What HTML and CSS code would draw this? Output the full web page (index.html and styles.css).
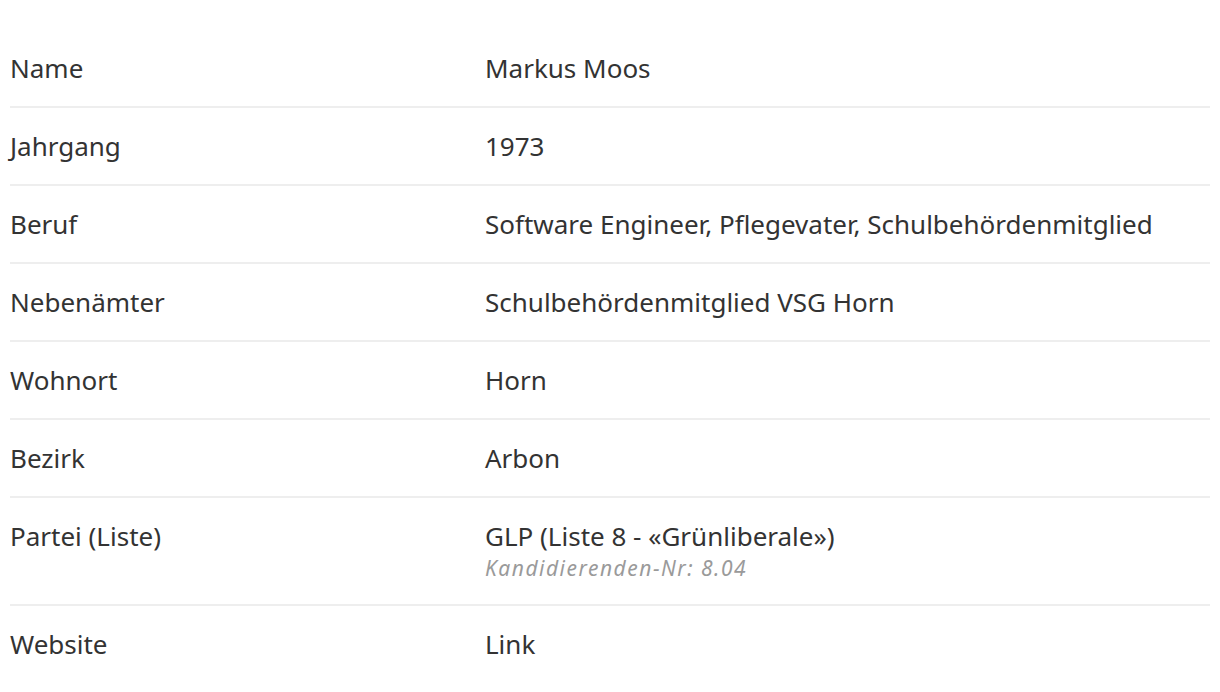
FILE: index.html
```html
<!DOCTYPE html>
<html lang="de">
<head>
<meta charset="utf-8">
<link rel="stylesheet" href="styles.css">
</head>
<body>
<div class="page">
  <div class="info">
    <div class="row"><div class="label">Name</div><div class="value">Markus Moos</div></div>
    <div class="row"><div class="label">Jahrgang</div><div class="value">1973</div></div>
    <div class="row"><div class="label">Beruf</div><div class="value">Software Engineer, Pflegevater, Schulbehördenmitglied</div></div>
    <div class="row"><div class="label">Nebenämter</div><div class="value">Schulbehördenmitglied VSG Horn</div></div>
    <div class="row"><div class="label">Wohnort</div><div class="value">Horn</div></div>
    <div class="row"><div class="label">Bezirk</div><div class="value">Arbon</div></div>
    <div class="row"><div class="label">Partei (Liste)</div><div class="value">GLP (Liste 8 - «Grünliberale»)<div class="sub">Kandidierenden-Nr: 8.04</div></div></div>
    <div class="row"><div class="label">Website</div><div class="value"><a class="link" href="#">Link</a></div></div>
  </div>
</div>
</body>
</html>
```
FILE: styles.css
```css
html, body {
  margin: 0;
  background: #fff;
}
.page {
  padding: 30px 10px 0;
  font-family: "Noto Sans", "Liberation Sans", sans-serif;
  color: #333;
}
.info {
  display: flex;
  flex-direction: column;
}
.row {
  display: grid;
  grid-template-columns: 475px 1fr;
  padding: 23px 0;
  border-bottom: 2px solid #eeeeee;
  font-size: 26px;
  line-height: 30px;
}
.row:last-child {
  border-bottom: none;
}
.sub {
  margin-top: 4px;
  font-size: 21px;
  font-style: italic;
  letter-spacing: 1.5px;
  color: #9a9a9a;
  line-height: 26px;
}
.link {
  color: #333;
  text-decoration: none;
}
```
